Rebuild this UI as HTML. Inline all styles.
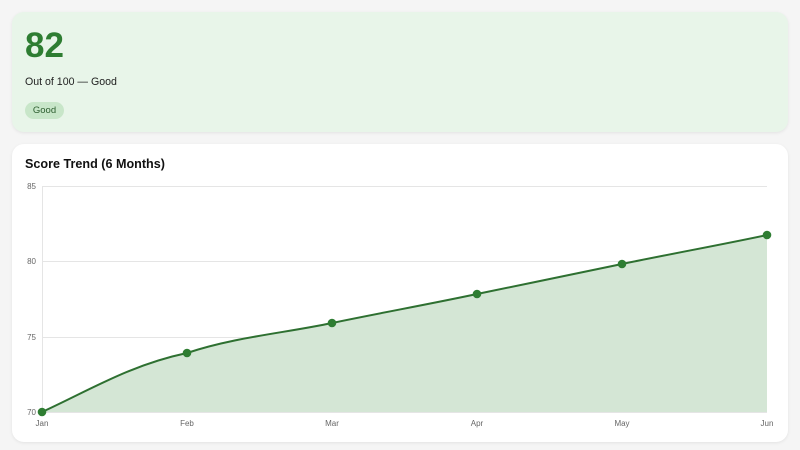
<!DOCTYPE html>
<html><head><style>
body{margin:0;width:800px;height:450px;background:#f5f5f5;font-family:"Liberation Sans",sans-serif;position:relative;overflow:hidden}
.c1{position:absolute;left:12px;top:12px;width:776px;height:120px;background:#e8f5e9;border-radius:12px;box-shadow:0 1px 3px rgba(0,0,0,.08)}
.c2{position:absolute;left:12px;top:144px;width:776px;height:298px;background:#fff;border-radius:12px;box-shadow:0 1px 3px rgba(0,0,0,.08)}
.num{position:absolute;left:25px;top:26px;font-size:35px;font-weight:bold;color:#2e7d32;line-height:40px}
.sub{position:absolute;left:25px;top:76px;font-size:10.6px;color:#222}
.badge{position:absolute;left:25px;top:102px;width:39px;height:17px;background:#c8e6c9;border-radius:9px;font-size:9.5px;color:#2e5e30;text-align:center;line-height:17px}
.t{position:absolute;left:25px;top:157px;font-size:12.6px;font-weight:bold;color:#111}
svg{position:absolute;left:0;top:0}
</style></head><body>
<div class="c1"></div>
<div class="num">82</div>
<div class="sub">Out of 100 — Good</div>
<div class="badge">Good</div>
<div class="c2"></div>
<div class="t">Score Trend (6 Months)</div>
<svg width="800" height="450" font-family="Liberation Sans, sans-serif" font-size="8" fill="#666">
<g stroke="#e5e5e5" stroke-width="1">
<line x1="42" y1="186.5" x2="767" y2="186.5"/><line x1="42" y1="261.5" x2="767" y2="261.5"/><line x1="42" y1="337.5" x2="767" y2="337.5"/><line x1="42" y1="412.5" x2="767" y2="412.5"/><line x1="42.5" y1="186" x2="42.5" y2="412"/>
</g>
<text x="36" y="189" text-anchor="end">85</text><text x="36" y="264" text-anchor="end">80</text><text x="36" y="340" text-anchor="end">75</text><text x="36" y="415" text-anchor="end">70</text>
<g text-anchor="middle"><text x="42" y="426">Jan</text><text x="187" y="426">Feb</text><text x="332" y="426">Mar</text><text x="477" y="426">Apr</text><text x="622" y="426">May</text><text x="767" y="426">Jun</text></g>
<path d="M42,412 C90,390 130,365 187,353 C235,337 285,333 332,323 C380,313 430,304 477,294 C525,284 575,274 622,264 C670,254 720,245 767,235 L767,412 Z" fill="#d4e6d5"/>
<path d="M42,412 C90,390 130,365 187,353 C235,337 285,333 332,323 C380,313 430,304 477,294 C525,284 575,274 622,264 C670,254 720,245 767,235" fill="none" stroke="#2e7031" stroke-width="2"/>
<g fill="#2e7d32"><circle cx="42" cy="412" r="4.3"/><circle cx="187" cy="353" r="4.3"/><circle cx="332" cy="323" r="4.3"/><circle cx="477" cy="294" r="4.3"/><circle cx="622" cy="264" r="4.3"/><circle cx="767" cy="235" r="4.3"/></g>
</svg>
</body></html>
